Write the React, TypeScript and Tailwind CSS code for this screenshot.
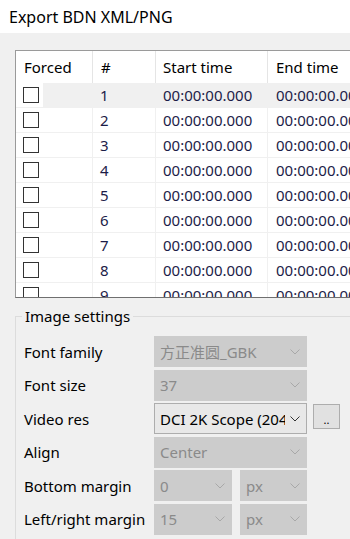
import React from "react";

const rows = [1, 2, 3, 4, 5, 6, 7, 8, 9];

function Chevron({ disabled }: { disabled?: boolean }) {
  return (
    <svg width="10" height="6" viewBox="0 0 10 6" className="shrink-0">
      <polyline
        points="0.5,0.5 5,5 9.5,0.5"
        fill="none"
        stroke={disabled ? "#a8a8a8" : "#333333"}
        strokeWidth="1"
      />
    </svg>
  );
}

function Combo({
  value,
  width,
  disabled = true,
}: {
  value: string;
  width: string;
  disabled?: boolean;
}) {
  return (
    <div
      className={
        "h-[31px] flex items-center pl-[5px] pr-[6px] border overflow-hidden shrink-0 " +
        width +
        (disabled
          ? " bg-[#cccccc] border-[#cccccc] text-[#8a8a8a]"
          : " bg-[#e8e8e8] border-[#adadad] text-[#000]")
      }
    >
      <span className="flex-1 min-w-0 mr-[5px] whitespace-nowrap overflow-hidden">{value}</span>
      <Chevron disabled={disabled} />
    </div>
  );
}

function SettingRow({ label, children }: { label: string; children: React.ReactNode }) {
  return (
    <div className="flex items-start">
      <div className="w-[130px] h-[31px] flex items-center text-black shrink-0">{label}</div>
      {children}
    </div>
  );
}

export default function App() {
  return (
    <div className="w-[350px] h-[539px] overflow-hidden bg-[#f0f0f0] font-['Noto_Sans','Noto_Sans_CJK_SC',sans-serif] text-[15px] leading-[20px]">
      {/* Window title */}
      <div className="h-[33px] bg-white pl-[9px] flex items-center text-[16px] text-black">
        Export BDN XML/PNG
      </div>

      <div className="pl-[15px] pt-[17px]">
        {/* Subtitle list */}
        <div className="w-[420px] h-[248px] border border-[#9a9a9a] border-b-[#6f6f6f] bg-white overflow-hidden">
          <div className="grid grid-cols-[77px_63px_112px_1fr] h-[32px] text-black">
            <div className="pl-[8px] flex items-center border-r border-[#e5e5e5]">Forced</div>
            <div className="pl-[8px] flex items-center border-r border-[#e5e5e5]">#</div>
            <div className="pl-[7px] flex items-center border-r border-[#e5e5e5]">Start time</div>
            <div className="pl-[8px] flex items-center">End time</div>
          </div>
          {rows.map((n) => {
            const current = n === 1;
            const sep = current ? "" : " border-r border-[#f0f0f0]";
            const bg = current ? " bg-[#f0f0f0]" : "";
            return (
              <div
                key={n}
                className="grid grid-cols-[77px_63px_112px_1fr] h-[25px] border-b border-[#f0f0f0] text-[#1c1c48]"
              >
                <div className={"flex items-center" + sep}>
                  <div className="ml-[7px] w-[16px] h-[16px] border border-[#333333] bg-white shrink-0" />
                  <div className={"ml-[4px] flex-1 h-full" + bg} />
                </div>
                <div className={"pl-[7px] flex items-center" + sep + bg}>{n}</div>
                <div className={"pl-[7px] flex items-center" + sep + bg}>00:00:00.000</div>
                <div className={"pl-[8px] flex items-center whitespace-nowrap" + bg}>00:00:00.000</div>
              </div>
            );
          })}
        </div>

        {/* Image settings group */}
        <fieldset className="mt-[8px] w-[420px] h-[300px] border border-[#dcdcdc] pl-[8px] pt-[10px]">
          <legend className="ml-[-2px] px-[3px] text-black">Image settings</legend>
          <div className="flex flex-col gap-[2.6px]">
            <SettingRow label="Font family">
              <Combo value="方正准圆_GBK" width="w-[153px]" />
            </SettingRow>
            <SettingRow label="Font size">
              <Combo value="37" width="w-[153px]" />
            </SettingRow>
            <SettingRow label="Video res">
              <Combo value="DCI 2K Scope (2048x858)" width="w-[153px]" disabled={false} />
              <div className="ml-[6px] mt-[1px] w-[27px] h-[25px] border border-[#adadad] bg-[#e1e1e1] flex items-end justify-center text-[11px] leading-[16px] text-black shrink-0">
                ..
              </div>
            </SettingRow>
            <SettingRow label="Align">
              <Combo value="Center" width="w-[153px]" />
            </SettingRow>
            <SettingRow label="Bottom margin">
              <div className="flex gap-[8px]">
                <Combo value="0" width="w-[78px]" />
                <Combo value="px" width="w-[67px]" />
              </div>
            </SettingRow>
            <SettingRow label="Left/right margin">
              <div className="flex gap-[8px]">
                <Combo value="15" width="w-[78px]" />
                <Combo value="px" width="w-[67px]" />
              </div>
            </SettingRow>
          </div>
        </fieldset>
      </div>
    </div>
  );
}
